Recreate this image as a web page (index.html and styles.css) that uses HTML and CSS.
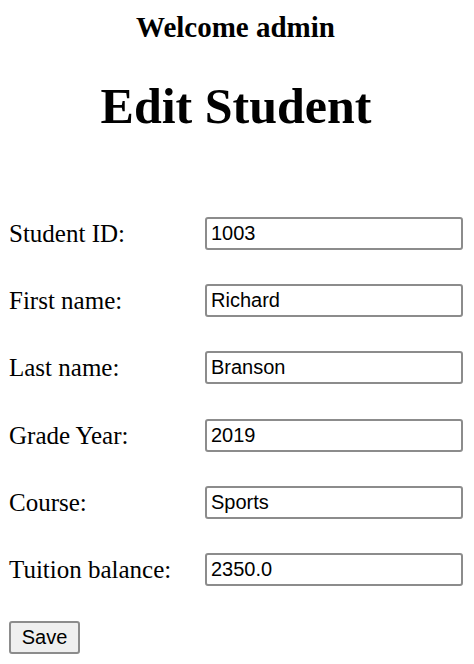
FILE: index.html
```html
<!DOCTYPE html>
<html>
<head>
<meta charset="utf-8">
<title>Edit Student</title>
<link rel="stylesheet" href="styles.css">
</head>
<body>
<h3 class="welcome">Welcome admin</h3>
<h1 class="title">Edit Student</h1>
<form class="form">
  <div class="fields">
    <label class="label">Student ID:</label>
    <input class="field" type="text" value="1003">
    <label class="label">First name:</label>
    <input class="field" type="text" value="Richard">
    <label class="label">Last name:</label>
    <input class="field" type="text" value="Branson">
    <label class="label">Grade Year:</label>
    <input class="field" type="text" value="2019">
    <label class="label">Course:</label>
    <input class="field" type="text" value="Sports">
    <label class="label">Tuition balance:</label>
    <input class="field" type="text" value="2350.0">
  </div>
  <button class="save" type="button">Save</button>
</form>
</body>
</html>
```
FILE: styles.css
```css
html, body {
  margin: 0;
  padding: 0;
  background: #ffffff;
  color: #000000;
  font-family: "Liberation Serif", "Times New Roman", serif;
}

body {
  width: 474px;
  height: 664px;
  overflow: hidden;
}

.welcome {
  margin: 10px 0 0 0;
  padding-right: 3px;
  font-size: 29px;
  line-height: 34px;
  font-weight: bold;
  text-align: center;
}

.title {
  margin: 33px 0 0 0;
  padding-right: 2px;
  font-size: 50px;
  line-height: 58px;
  font-weight: bold;
  text-align: center;
}

.form {
  margin: 82px 0 0 0;
  padding-left: 9px;
}

.fields {
  display: grid;
  grid-template-columns: 196px 258px;
  grid-auto-rows: 33px;
  row-gap: 34.2px;
  align-items: center;
}

.label {
  font-size: 25px;
  line-height: 33px;
}

.field {
  box-sizing: border-box;
  width: 258px;
  height: 33px;
  margin: 0;
  padding: 0 4px;
  border: 2px solid #8c8c8c;
  border-radius: 3px;
  background: #ffffff;
  color: #000000;
  font-family: "Liberation Sans", Arial, sans-serif;
  font-size: 20px;
  outline: none;
}

.save {
  box-sizing: border-box;
  display: block;
  margin-top: 35px;
  width: 71px;
  height: 33px;
  padding: 0;
  border: 2px solid #8c8c8c;
  border-radius: 3px;
  background: #efefef;
  color: #000000;
  font-family: "Liberation Sans", Arial, sans-serif;
  font-size: 20px;
  text-align: center;
}
```
